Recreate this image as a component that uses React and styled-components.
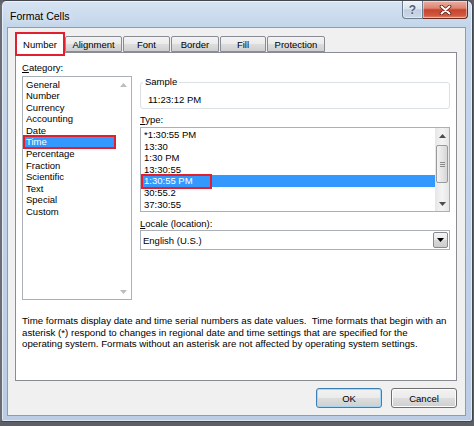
import React from "react";
import styled, { createGlobalStyle } from "styled-components";

const GlobalStyle = createGlobalStyle`
html, body {
  margin: 0;
  padding: 0;
}
body {
  background: #5d6066;
  font-family: "Liberation Sans", Arial, sans-serif;
  font-size: 9.5px;
  color: #000;
}
#root {
  width: 474px;
  height: 426px;
  overflow: hidden;
}
`;

const Window = styled.div`
  box-sizing: border-box;
  width: 473px;
  height: 422px;
  border: 1px solid #43474d;
  border-left: 2px solid #6a6e74;
  border-radius: 6px 6px 3px 3px;
  background: linear-gradient(180deg, #d6e3f2 0%, #c4d6ea 6%, #c0d2e8 60%, #bacde4 100%);
  box-shadow: inset 0 0 0 1px rgba(255, 255, 255, 0.55);
  display: flex;
  flex-direction: column;
  padding: 0 6px 5px 5px;
`;

const TitleBar = styled.div`
  height: 26px;
  display: flex;
  align-items: flex-start;
`;

const Title = styled.div`
  font-size: 10.5px;
  padding: 9px 0 0 3px;
  color: #000;
  text-shadow: 0 0 6px rgba(255, 255, 255, 0.9);
`;

const Controls = styled.div`
  display: flex;
  margin-left: auto;
  margin-right: -2px;
`;

const CaptionButton = styled.div`
  box-sizing: border-box;
  width: ${(p) => p.$w}px;
  height: 18px;
  display: flex;
  align-items: center;
  justify-content: center;
  border: 1px solid ${(p) => (p.$close ? "#6a2a22" : "#6c7c90")};
  border-top: none;
  border-left-width: ${(p) => (p.$close ? 0 : 1)}px;
  border-radius: ${(p) => (p.$close ? "0 0 4px 0" : "0 0 0 4px")};
  background: ${(p) =>
    p.$close
      ? "linear-gradient(180deg, #eab0a3 0%, #de8471 42%, #c8432c 52%, #d0593f 85%, #e08a6c 100%)"
      : "linear-gradient(180deg, #eef3f9 0%, #d9e3ef 45%, #c0cedf 52%, #cbd8e8 100%)"};
  box-shadow: inset 0 0 0 1px rgba(255, 255, 255, 0.45);
  color: #54606e;
  font-size: 12px;
  font-weight: bold;
  text-shadow: 0 0 2px #fff;
`;

const Client = styled.div`
  flex: 1;
  display: flex;
  flex-direction: column;
  background: #f0f0f0;
  border: 1px solid #8e9cae;
  padding: 5px 8px 0 7px;
`;

const TabRow = styled.div`
  display: flex;
  align-items: flex-end;
  height: 19px;
  position: relative;
  z-index: 1;
`;

const Tab = styled.div`
  position: relative;
  box-sizing: border-box;
  width: ${(p) => p.$w}px;
  margin-left: 1px;
  height: ${(p) => (p.$active ? 20 : 16)}px;
  margin-bottom: ${(p) => (p.$active ? -1 : 0)}px;
  padding-top: ${(p) => (p.$active ? 3 : 0)}px;
  line-height: 16px;
  text-align: center;
  border: 1px solid #898c95;
  border-bottom: ${(p) => (p.$active ? "none" : "1px solid #898c95")};
  border-radius: 2px 2px 0 0;
  background: ${(p) =>
    p.$active ? "#fff" : "linear-gradient(180deg, #f3f3f3 0%, #ebebeb 50%, #dddddd 52%, #cfcfcf 100%)"};
`;

const RedBox = styled.div`
  position: absolute;
  left: ${(p) => p.$l ?? -2}px;
  top: ${(p) => p.$t ?? -2}px;
  bottom: ${(p) => p.$b ?? -2}px;
  width: ${(p) => (p.$w ? `${p.$w}px` : "auto")};
  right: ${(p) => (p.$w ? "auto" : `${p.$r ?? -2}px`)};
  border: 2px solid #e0202e;
  pointer-events: none;
`;

const Panel = styled.div`
  flex: 1;
  border: 1px solid #898c95;
  background: #fff;
  padding: 9px 6px 0 6px;
`;

const Columns = styled.div`
  display: grid;
  grid-template-columns: 110px 1fr;
  column-gap: 8px;
`;

const Column = styled.div`
  display: flex;
  flex-direction: column;
`;

const Label = styled.div`
  line-height: 12px;
  margin-top: ${(p) => p.$mt || 0}px;
  margin-bottom: ${(p) => p.$mb || 0}px;
`;

const ListBox = styled.div`
  box-sizing: border-box;
  height: ${(p) => p.$h}px;
  display: flex;
  border: 1px solid #a9b0b9;
  background: #fff;
`;

const Items = styled.div`
  flex: 1;
  padding: ${(p) => p.$pt}px 0 0 1px;
`;

const Row = styled.div`
  position: relative;
  line-height: 11.6px;
  height: 11.6px;
  padding-left: 2px;
  white-space: nowrap;
  background: ${(p) => (p.$sel ? "#3399ff" : "transparent")};
  color: ${(p) => (p.$sel ? "#fff" : "#000")};
`;

const ScrollBar = styled.div`
  width: ${(p) => p.$w}px;
  display: flex;
  flex-direction: column;
  align-items: center;
  background: ${(p) => (p.$enabled ? "linear-gradient(90deg, #e6e6e6, #f4f4f4 50%, #e6e6e6)" : "#fff")};
`;

const ArrowBox = styled.div`
  height: 15px;
  width: 100%;
  display: flex;
  align-items: center;
  justify-content: center;
`;

const Thumb = styled.div`
  box-sizing: border-box;
  width: 12px;
  height: 38px;
  margin-top: 2px;
  border: 1px solid #9a9a9a;
  border-radius: 2px;
  background: linear-gradient(90deg, #f4f4f4, #e6e6e6 50%, #d6d6d6);
  display: flex;
  flex-direction: column;
  align-items: center;
  justify-content: center;
  gap: 1px;
`;

const Grip = styled.div`
  width: 5px;
  height: 1px;
  background: #8a8a8a;
`;

const Spacer = styled.div`
  flex: 1;
`;

const Group = styled.fieldset`
  margin: 14px 0 0 0;
  padding: 0 0 2px 7px;
  border: 1px solid #dcdfe3;
  border-radius: 3px;
`;

const Legend = styled.legend`
  padding: 0 2px;
  margin-left: -5px;
  line-height: 12px;
`;

const SampleValue = styled.div`
  line-height: 12px;
  padding-top: 6px;
`;

const Select = styled.div`
  box-sizing: border-box;
  height: 20px;
  display: flex;
  align-items: center;
  border: 1px solid #a9b0b9;
  padding: 0 1px 0 2px;
  background: #fff;
`;

const SelectText = styled.div`
  flex: 1;
`;

const DropButton = styled.div`
  box-sizing: border-box;
  width: 15px;
  height: 16px;
  display: flex;
  align-items: center;
  justify-content: center;
  border: 1px solid #8a8a8a;
  border-radius: 2px;
  background: linear-gradient(180deg, #f5f5f5 0%, #e8e8e8 50%, #d8d8d8 52%, #cdcdcd 100%);
`;

const Description = styled.div`
  margin-top: 15px;
  font-size: 9.7px;
  line-height: 11.6px;
  white-space: nowrap;
`;

const Footer = styled.div`
  height: 34px;
  box-sizing: border-box;
  padding-top: 7px;
  display: flex;
  justify-content: flex-end;
  gap: 9px;
`;

const Button = styled.div`
  box-sizing: border-box;
  width: 66px;
  height: 20px;
  display: flex;
  align-items: center;
  justify-content: center;
  border: 1px solid ${(p) => (p.$default ? "#3c7fb1" : "#707070")};
  border-radius: 3px;
  background: linear-gradient(180deg, #f2f2f2 0%, #ebebeb 48%, #dddddd 52%, #cfcfcf 100%);
  box-shadow: inset 0 0 0 1px ${(p) => (p.$default ? "#a6d8f5" : "#fcfcfc")};
`;

const Arrow = ({ up, color = "#4d4d4d" }) => (
  <svg width="7" height="4" viewBox="0 0 7 4">
    <path d={up ? "M0 4 L3.5 0 L7 4 Z" : "M0 0 L7 0 L3.5 4 Z"} fill={color} />
  </svg>
);

const CloseGlyph = () => (
  <svg width="13" height="10" viewBox="0 0 13 10">
    <path d="M2.5 1.5 L10.5 8.5 M10.5 1.5 L2.5 8.5" stroke="#5a1a14" strokeWidth="3.6" strokeLinecap="round" />
    <path d="M2.5 1.5 L10.5 8.5 M10.5 1.5 L2.5 8.5" stroke="#fff" strokeWidth="2" strokeLinecap="round" />
  </svg>
);

const tabs = [
  { name: "Number", w: 48 },
  { name: "Alignment", w: 57 },
  { name: "Font", w: 47 },
  { name: "Border", w: 48 },
  { name: "Fill", w: 46 },
  { name: "Protection", w: 58 },
];

const categories = [
  "General",
  "Number",
  "Currency",
  "Accounting",
  "Date",
  "Time",
  "Percentage",
  "Fraction",
  "Scientific",
  "Text",
  "Special",
  "Custom",
];

const types = ["*1:30:55 PM", "13:30", "1:30 PM", "13:30:55", "1:30:55 PM", "30:55.2", "37:30:55"];

function App() {
  return (
    <>
      <GlobalStyle />
      <Window>
        <TitleBar>
          <Title>Format Cells</Title>
          <Controls>
            <CaptionButton $w={21}>?</CaptionButton>
            <CaptionButton $w={45} $close>
              <CloseGlyph />
            </CaptionButton>
          </Controls>
        </TitleBar>
        <Client>
          <TabRow>
            {tabs.map((t, i) => (
              <Tab key={t.name} $w={t.w} $active={i === 0}>
                {t.name}
                {i === 0 && <RedBox $l={-2} $t={-2} $r={-2} $b={-3} />}
              </Tab>
            ))}
          </TabRow>
          <Panel>
            <Columns>
              <Column>
                <Label $mb={2}>
                  <u>C</u>ategory:
                </Label>
                <ListBox $h={224}>
                  <Items $pt={1.5}>
                    {categories.map((c) => (
                      <Row key={c} $sel={c === "Time"}>
                        {c}
                        {c === "Time" && <RedBox $l={-1} $t={-1} $b={-1} $r={-1} />}
                      </Row>
                    ))}
                  </Items>
                  <ScrollBar $w={16}>
                    <ArrowBox>
                      <Arrow up color="#bdbdbd" />
                    </ArrowBox>
                    <Spacer />
                    <ArrowBox>
                      <Arrow color="#bdbdbd" />
                    </ArrowBox>
                  </ScrollBar>
                </ListBox>
              </Column>
              <Column>
                <Group>
                  <Legend>Sample</Legend>
                  <SampleValue>11:23:12 PM</SampleValue>
                </Group>
                <Label $mt={5} $mb={1}>
                  <u>T</u>ype:
                </Label>
                <ListBox $h={85}>
                  <Items $pt={1}>
                    {types.map((t, i) => (
                      <Row key={t} $sel={i === 4}>
                        {t}
                        {i === 4 && <RedBox $l={-1} $t={-1} $b={-2} $w={67} />}
                      </Row>
                    ))}
                  </Items>
                  <ScrollBar $w={14} $enabled>
                    <ArrowBox>
                      <Arrow up />
                    </ArrowBox>
                    <Thumb>
                      <Grip />
                      <Grip />
                      <Grip />
                    </Thumb>
                    <Spacer />
                    <ArrowBox>
                      <Arrow />
                    </ArrowBox>
                  </ScrollBar>
                </ListBox>
                <Label $mt={6}>
                  <u>L</u>ocale (location):
                </Label>
                <Select>
                  <SelectText>English (U.S.)</SelectText>
                  <DropButton>
                    <Arrow color="#000" />
                  </DropButton>
                </Select>
              </Column>
            </Columns>
            <Description>
              Time formats display date and time serial numbers as date values.&nbsp; Time formats that begin with an
              <br />
              asterisk (*) respond to changes in regional date and time settings that are specified for the
              <br />
              operating system. Formats without an asterisk are not affected by operating system settings.
            </Description>
          </Panel>
          <Footer>
            <Button $default>OK</Button>
            <Button>Cancel</Button>
          </Footer>
        </Client>
      </Window>
    </>
  );
}

export default App;
